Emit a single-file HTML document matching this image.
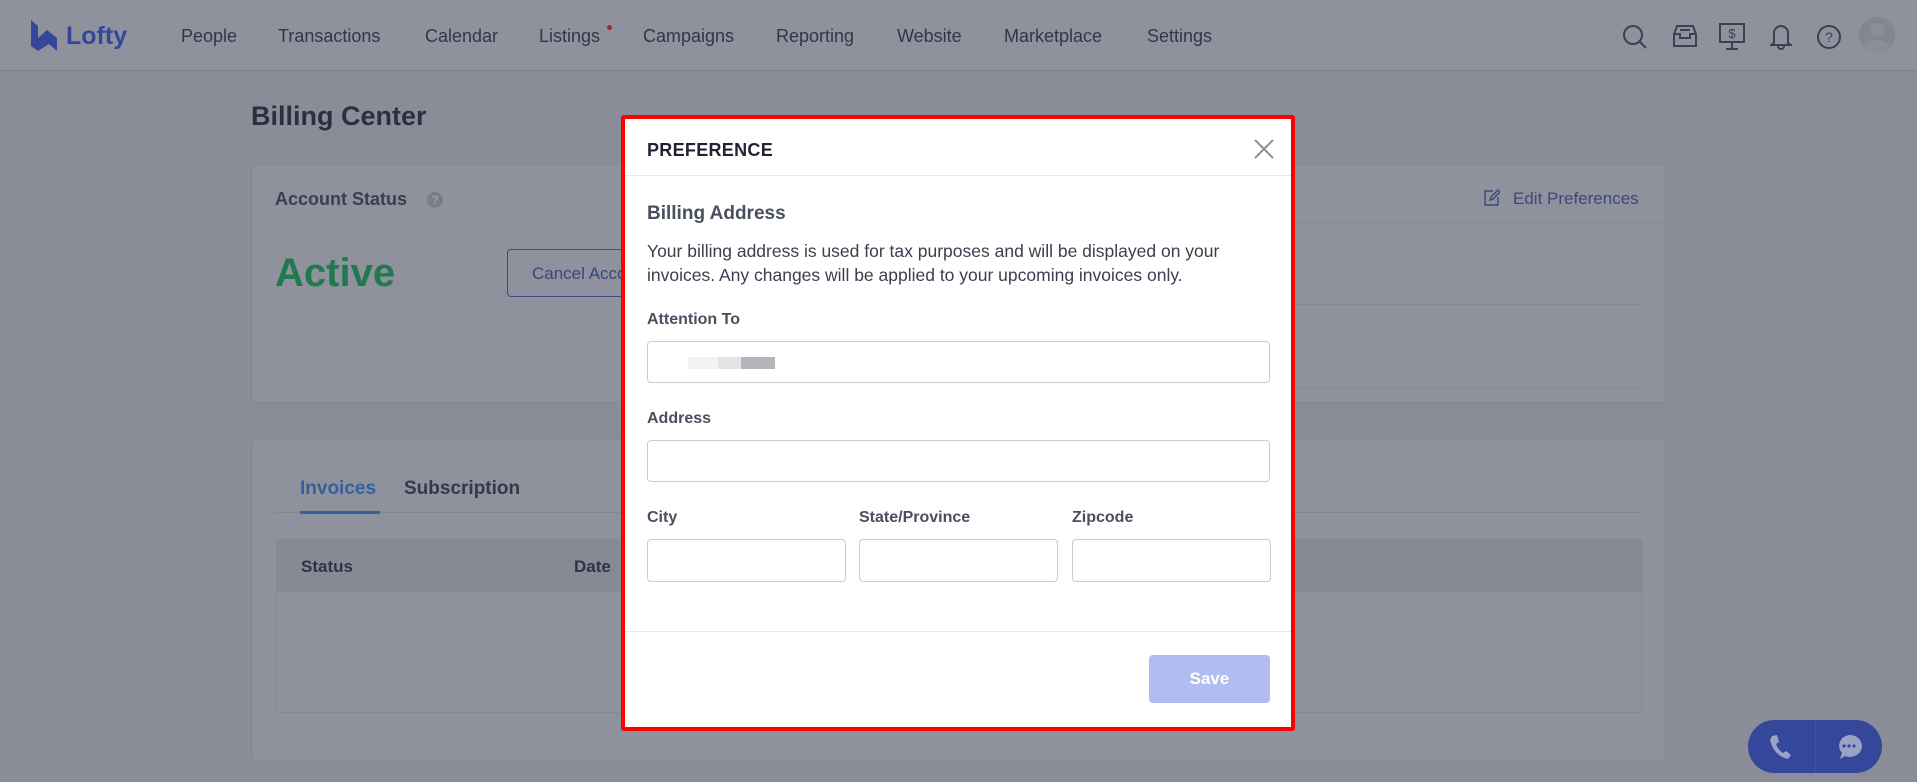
<!DOCTYPE html>
<html><head><meta charset="utf-8"><style>
*{box-sizing:border-box;margin:0;padding:0}
body{width:1917px;height:782px;overflow:hidden;background:#8a8d98;font-family:"Liberation Sans",sans-serif;color:#2f3344;position:relative}
.abs{position:absolute}
.nav{left:0;top:0;width:1917px;height:71px;background:#8f929d;border-bottom:1px solid #80838e}
.nav .it{position:absolute;top:26px;font-size:18px;color:#323646}
.card{background:#8f929c;border:1px solid #858893;border-radius:4px}
.modal{left:621px;top:115px;width:674px;height:616px;border:4px solid #f00;background:#fff;border-radius:3px}
.lbl{position:absolute;font-size:16px;font-weight:bold;color:#4a4f5f}
.inp{position:absolute;border:1px solid #c9ccd4;border-radius:4px;background:#fff}
</style></head><body>
<div class="abs nav">
 <svg class="abs" style="left:29px;top:20px" width="30" height="32" viewBox="0 0 30 32"><path d="M2 0 L9 6 V18 L18 10 L28 18 L28 31 L20 24 L9 31 L2 26Z" fill="#34479a"/></svg>
 <div class="abs" style="left:66px;top:22px;font-size:25px;font-weight:bold;color:#34479a">Lofty</div>
 <div class="it" style="left:181px">People</div>
 <div class="it" style="left:278px">Transactions</div>
 <div class="it" style="left:425px">Calendar</div>
 <div class="it" style="left:539px">Listings</div>
 <div class="abs" style="left:607px;top:25px;width:5px;height:5px;border-radius:50%;background:#a3242c"></div>
 <div class="it" style="left:643px">Campaigns</div>
 <div class="it" style="left:776px">Reporting</div>
 <div class="it" style="left:897px">Website</div>
 <div class="it" style="left:1004px">Marketplace</div>
 <div class="it" style="left:1147px">Settings</div>
 <svg class="abs" style="left:1622px;top:24px" width="26" height="26" viewBox="0 0 26 26" fill="none" stroke="#3c4050" stroke-width="2"><circle cx="11" cy="11" r="9"/><path d="M17.5 17.5 L24 24"/></svg>
 <svg class="abs" style="left:1672px;top:24px" width="26" height="24" viewBox="0 0 26 24" fill="none" stroke="#3c4050" stroke-width="2"><path d="M5 2 H21 L24 10 V22 H2 V10Z M2 10 H8 V14 H18 V10 H24 M8 6 H18"/></svg>
 <svg class="abs" style="left:1719px;top:23px" width="26" height="28" viewBox="0 0 26 28" fill="none" stroke="#3c4050" stroke-width="2"><rect x="1" y="1" width="24" height="18"/><path d="M13 19 V25 M7 26 H19"/><text x="13" y="15" font-size="13" text-anchor="middle" fill="#3c4050" stroke="none" font-family="Liberation Sans">$</text></svg>
 <svg class="abs" style="left:1770px;top:22px" width="22" height="28" viewBox="0 0 22 28" fill="none" stroke="#3c4050" stroke-width="2"><path d="M4 21 V11 A7 7 0 0 1 18 11 V21 L21 23 H1Z M8 24 A3 3 0 0 0 14 24"/></svg>
 <svg class="abs" style="left:1816px;top:24px" width="26" height="26" viewBox="0 0 26 26" fill="none" stroke="#3c4050" stroke-width="2"><circle cx="13" cy="13" r="11"/><text x="13" y="18" font-size="14" text-anchor="middle" fill="#3c4050" stroke="none" font-family="Liberation Sans">?</text></svg>
 <div class="abs" style="left:1859px;top:17px;width:36px;height:36px;border-radius:50%;background:#83868f;overflow:hidden"><div class="abs" style="left:11px;top:6px;width:14px;height:14px;border-radius:50%;background:#8b8e98"></div><div class="abs" style="left:4px;top:23px;width:28px;height:20px;border-radius:50%;background:#8b8e98"></div></div>
</div>

<div class="abs" style="left:251px;top:101px;font-size:27px;font-weight:bold;color:#2b2f40">Billing Center</div>

<div class="abs card" style="left:251px;top:164px;width:1415px;height:239px">
 <div class="abs" style="left:23px;top:24px;font-size:18px;font-weight:bold;color:#3a3e4e">Account Status</div>
 <div class="abs" style="left:175px;top:27px;width:16px;height:16px;border-radius:50%;background:#7b7e88;color:#9a9da6;font-size:12px;font-weight:bold;text-align:center;line-height:16px">?</div>
 <div class="abs" style="left:23px;top:86px;font-size:40px;font-weight:bold;color:#22784f">Active</div>
 <div class="abs" style="left:255px;top:84px;width:200px;height:48px;border:1px solid #3b4a90;border-radius:4px;font-size:17px;color:#38447e;padding:14px 0 0 24px">Cancel Account</div>
 <div class="abs" style="left:1000px;top:57px;width:415px;height:1px;background:#868994"></div>
 <div class="abs" style="left:1000px;top:139px;width:392px;height:1px;background:#868994"></div>
 <div class="abs" style="left:1000px;top:222px;width:392px;height:1px;background:#868994"></div>
 <svg class="abs" style="left:1232px;top:24px" width="16" height="17" viewBox="0 0 16 17" fill="none" stroke="#3b4780" stroke-width="1.4"><path d="M9 2 H1 V16 H14 V8 M6 11 L7 8 L14 1 L16 3 L9 10Z"/></svg>
 <div class="abs" style="left:1261px;top:24px;font-size:17px;color:#3b4780">Edit Preferences</div>
</div>

<div class="abs card" style="left:251px;top:439px;width:1415px;height:322px">
 <div class="abs" style="left:48px;top:38px;font-size:19px;font-weight:bold;color:#34619e">Invoices</div>
 <div class="abs" style="left:152px;top:38px;font-size:19px;font-weight:bold;color:#343848">Subscription</div>
 <div class="abs" style="left:23px;top:72px;width:1368px;height:1px;background:#838691"></div>
 <div class="abs" style="left:48px;top:71px;width:80px;height:3px;background:#34619e"></div>
 <div class="abs" style="left:24px;top:99px;width:1366px;height:174px;border:1px solid #858893;border-radius:3px">
  <div style="height:52px;background:#878a95;position:relative">
   <div class="abs" style="left:24px;top:17px;font-size:17px;font-weight:bold;color:#2f3344">Status</div>
   <div class="abs" style="left:297px;top:17px;font-size:17px;font-weight:bold;color:#2f3344">Date</div>
  </div>
 </div>
</div>

<div class="abs modal">
 <div class="abs" style="left:22px;top:21px;font-size:18px;font-weight:bold;color:#1f2333;letter-spacing:.3px">PREFERENCE</div>
 <svg class="abs" style="left:629px;top:20px" width="20" height="20" viewBox="0 0 20 20" stroke="#8a8e99" stroke-width="2"><path d="M1 1 L19 19 M19 1 L1 19"/></svg>
 <div class="abs" style="left:0;top:56px;width:666px;height:1px;background:#e8e9ed"></div>
 <div class="abs" style="left:22px;top:84px;font-size:19px;font-weight:bold;color:#4a4f5f">Billing Address</div>
 <div class="abs" style="left:22px;top:120px;font-size:17.5px;line-height:24px;color:#3b3f4e;width:605px">Your billing address is used for tax purposes and will be displayed on your invoices. Any changes will be applied to your upcoming invoices only.</div>
 <div class="lbl" style="left:22px;top:192px">Attention To</div>
 <div class="inp" style="left:22px;top:222px;width:623px;height:42px"><div class="abs" style="left:40px;top:15px;width:30px;height:12px;background:#f3f3f5"></div><div class="abs" style="left:70px;top:15px;width:23px;height:12px;background:#e4e4e8"></div><div class="abs" style="left:93px;top:15px;width:34px;height:12px;background:#b4b5bb"></div></div>
 <div class="lbl" style="left:22px;top:291px">Address</div>
 <div class="inp" style="left:22px;top:321px;width:623px;height:42px"></div>
 <div class="lbl" style="left:22px;top:390px">City</div>
 <div class="lbl" style="left:234px;top:390px">State/Province</div>
 <div class="lbl" style="left:447px;top:390px">Zipcode</div>
 <div class="inp" style="left:22px;top:420px;width:199px;height:43px"></div>
 <div class="inp" style="left:234px;top:420px;width:199px;height:43px"></div>
 <div class="inp" style="left:447px;top:420px;width:199px;height:43px"></div>
 <div class="abs" style="left:0;top:512px;width:666px;height:1px;background:#e8e9ed"></div>
 <div class="abs" style="left:524px;top:536px;width:121px;height:48px;background:#b1bdf0;border-radius:4px;color:#fff;font-size:17px;font-weight:bold;text-align:center;line-height:48px">Save</div>
</div>

<div class="abs" style="left:1748px;top:720px;width:134px;height:53px;border-radius:27px;background:#34479a">
 <div class="abs" style="left:67px;top:0;width:1px;height:53px;background:#3f52a4"></div>
 <svg class="abs" style="left:20px;top:14px" width="24" height="26" viewBox="0 0 24 26"><path d="M4 2 L9 1 L11 8 L8 10 Q10 16 15 19 L18 17 L23 21 L20 25 Q6 22 2 6Z" fill="#9aa3c6"/></svg>
 <svg class="abs" style="left:87px;top:14px" width="28" height="26" viewBox="0 0 28 26"><path d="M14 1 A12 11 0 1 1 10 22 L5 25 L7 19 A12 11 0 0 1 14 1Z" fill="#9aa3c6"/><circle cx="9" cy="12" r="1.6" fill="#34479a"/><circle cx="14" cy="12" r="1.6" fill="#34479a"/><circle cx="19" cy="12" r="1.6" fill="#34479a"/></svg>
</div>
</body></html>
